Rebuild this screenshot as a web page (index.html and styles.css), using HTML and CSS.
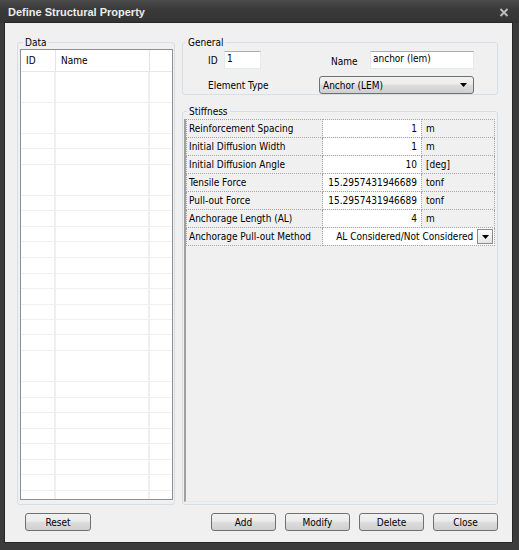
FILE: index.html
```html
<!DOCTYPE html>
<html lang="en">
<head>
  <meta charset="UTF-8">
  <title>Define Structural Property</title>
  <link rel="stylesheet" href="styles.css">
</head>
<body>
<div class="window">
  <div class="titlebar">
    <span class="title">Define Structural Property</span>
    <svg class="close" width="10" height="9" viewBox="0 0 10 9">
      <path d="M1.5 1 L8.5 8 M8.5 1 L1.5 8" stroke="#bdbdbd" stroke-width="2"/>
    </svg>
  </div>
  <div class="client">
    <div class="main">
      <!-- Data 列表 -->
      <fieldset class="group data">
        <legend>Data</legend>
        <div class="listview">
          <div class="lvHead">
            <span class="colId">ID</span>
            <span class="colName">Name</span>
            <span class="colPad"></span>
          </div>
          <div class="lvBody">
            <div class="colId"></div>
            <div class="colName"></div>
            <div class="colPad"></div>
          </div>
        </div>
      </fieldset>

      <div class="right">
        <!-- General -->
        <fieldset class="group general">
          <legend>General</legend>
          <div class="row">
            <span class="lbl lblId">ID</span>
            <span class="textbox tbId">1</span>
            <span class="lbl lblName">Name</span>
            <span class="textbox tbName">anchor (lem)</span>
          </div>
          <div class="row row2">
            <span class="lbl lblType">Element Type</span>
            <span class="combo">
              <span class="comboText">Anchor (LEM)</span>
              <svg class="arrow" width="7" height="4" viewBox="0 0 7 4"><path d="M0 0 H7 L3.5 4 Z" fill="#000"/></svg>
            </span>
          </div>
        </fieldset>

        <!-- Stiffness -->
        <fieldset class="group stiffness">
          <legend>Stiffness</legend>
          <div class="pgrid">
            <table class="props">
              <tr><td class="pName">Reinforcement Spacing</td><td class="pVal">1</td><td class="pUnit">m</td></tr>
              <tr><td class="pName">Initial Diffusion Width</td><td class="pVal">1</td><td class="pUnit">m</td></tr>
              <tr><td class="pName">Initial Diffusion Angle</td><td class="pVal">10</td><td class="pUnit">[deg]</td></tr>
              <tr><td class="pName">Tensile Force</td><td class="pVal">15.2957431946689</td><td class="pUnit">tonf</td></tr>
              <tr><td class="pName">Pull-out Force</td><td class="pVal">15.2957431946689</td><td class="pUnit">tonf</td></tr>
              <tr><td class="pName">Anchorage Length (AL)</td><td class="pVal">4</td><td class="pUnit">m</td></tr>
              <tr>
                <td class="pName">Anchorage Pull-out Method</td>
                <td class="pVal pCombo" colspan="2">
                  <span class="comboVal">AL Considered/Not Considered</span>
                  <span class="dropBtn"><svg width="7" height="4" viewBox="0 0 7 4"><path d="M0 0 H7 L3.5 4 Z" fill="#000"/></svg></span>
                </td>
              </tr>
            </table>
          </div>
        </fieldset>
      </div>
    </div>

    <div class="buttons">
      <button class="btn reset">Reset</button>
      <button class="btn add">Add</button>
      <button class="btn">Modify</button>
      <button class="btn">Delete</button>
      <button class="btn">Close</button>
    </div>
  </div>
</div>
</body>
</html>
```
FILE: styles.css
```css
*{
  margin: 0;
  padding: 0;
  box-sizing: border-box;
}
html,body{
  width: 100%;
  height: 100%;
  background-color: #2f2f2f;
  overflow: hidden;
}
body{
  font-family: "DejaVu Sans Condensed", "DejaVu Sans", sans-serif;
  font-stretch: condensed;
  font-size: 10px;
  color: #000;
}
/*窗口外框*/
.window{
  width: 519px;
  height: 550px;
  background-color: #3b3b3b;
  padding: 0 7px 8px 5px;
  display: flex;
  flex-direction: column;
}
.titlebar{
  height: 23px;
  margin: 0 -7px 0 -5px;
  padding: 0 10px 0 8px;
  background: linear-gradient(#4b4b4b, #3a3a3a 40%, #333333);
  display: flex;
  align-items: center;
  justify-content: space-between;
}
.title{
  font-family: "Liberation Sans", Arial, sans-serif;
  font-stretch: normal;
  font-weight: bold;
  font-size: 11px;
  color: #ececec;
}
.close{
  margin-top: 1px;
}
.client{
  flex: 1;
  background-color: #f0f0f0;
  box-shadow: 0 0 0 1px #262626;
  padding: 13px 14px 11px 12px;
  display: flex;
  flex-direction: column;
}
.main{
  height: 469px;
  display: flex;
  gap: 7px;
}
/*分组框*/
.group{
  border: 1px solid #d5dfe5;
  border-radius: 3px;
  min-width: 0;
}
.group legend{
  margin-left: 3px;
  padding: 0 2px;
  line-height: 13px;
}
.data{
  width: 158px;
  padding: 0 1px 4px 2px;
  display: flex;
}
.right{
  flex: 1;
  display: flex;
  flex-direction: column;
}
/*列表*/
.listview{
  flex: 1;
  border: 1px solid #8e8f8f;
  background-color: #fff;
  display: flex;
  flex-direction: column;
}
.lvHead{
  height: 22px;
  display: flex;
  border-bottom: 1px solid #e8e8e8;
}
.lvHead span{
  line-height: 21px;
  padding-left: 5px;
  border-right: 1px solid #e2e3e4;
}
.lvBody{
  flex: 1;
  display: flex;
}
.lvBody div{
  background: repeating-linear-gradient(to bottom, #fff 0, #fff 14.5px, #efefef 14.5px, #efefef 15.5px);
  border-right: 2px solid #efefef;
}
.colId{
  width: 35px;
}
.colName{
  width: 94px;
}
.colPad{
  flex: 1;
  border-right: none !important;
}
/*General*/
.general{
  height: 59px;
  padding: 2px 0 0 0;
}
.row{
  display: flex;
  align-items: center;
  height: 18px;
  padding-left: 25px;
}
.row2{
  margin-top: 7px;
}
.lblId{
  width: 16px;
}
.lblName{
  width: 39px;
  margin-left: 70px;
  padding-top: 3px;
}
.lblType{
  width: 111px;
}
.textbox{
  height: 18px;
  background-color: #fff;
  border: 1px solid #e3e9ef;
  border-top-color: #abadb3;
  padding-left: 2px;
  line-height: 14px;
}
.tbId{
  width: 37px;
}
.tbName{
  width: 104px;
}
.combo{
  width: 155px;
  height: 18px;
  border: 1px solid #707070;
  border-radius: 3px;
  background: linear-gradient(#f2f2f2, #ebebeb 45%, #dddddd 50%, #cfcfcf);
  display: flex;
  align-items: center;
  justify-content: space-between;
  padding: 0 6px 0 3px;
}
/*Stiffness*/
.stiffness{
  flex: 1;
  margin-top: 10px;
  padding: 1px 2px 2px 1px;
  display: flex;
}
.pgrid{
  flex: 1;
  border-left: 2px solid #a0a0a0;
  border-bottom: 1px solid #e6e6e6;
}
.props{
  width: 308px;
  border-collapse: collapse;
  table-layout: fixed;
}
.props td{
  height: 18px;
  border: 1px dotted #a5a5a5;
  white-space: nowrap;
  overflow: hidden;
}
.pName{
  width: 136px;
  padding-left: 2px;
  background-color: #f0f0f0;
}
.pVal{
  width: 99px;
  text-align: right;
  padding-right: 4px;
  background-color: #fff;
}
.pUnit{
  width: 73px;
  padding-left: 4px;
  background-color: #f0f0f0;
}
.pCombo{
  padding-right: 1px;
}
.pCombo .comboVal{
  vertical-align: middle;
}
.dropBtn{
  display: inline-flex;
  width: 16px;
  height: 15px;
  margin-left: 1px;
  vertical-align: middle;
  align-items: center;
  justify-content: center;
  border: 1px solid #8a8a8a;
  background: linear-gradient(#fdfdfd, #e6e6e6);
}
/*按钮*/
.buttons{
  margin-top: 8px;
  display: flex;
  gap: 9px;
}
.btn{
  width: 65px;
  height: 18px;
  font-family: inherit;
  font-stretch: condensed;
  font-size: 10px;
  color: #000;
  border: 1px solid #707070;
  border-radius: 3px;
  background: linear-gradient(#f2f2f2, #ebebeb 45%, #dddddd 50%, #cfcfcf);
}
.reset{
  width: 66px;
  margin-left: 8px;
}
.add{
  margin-left: auto;
}
```
